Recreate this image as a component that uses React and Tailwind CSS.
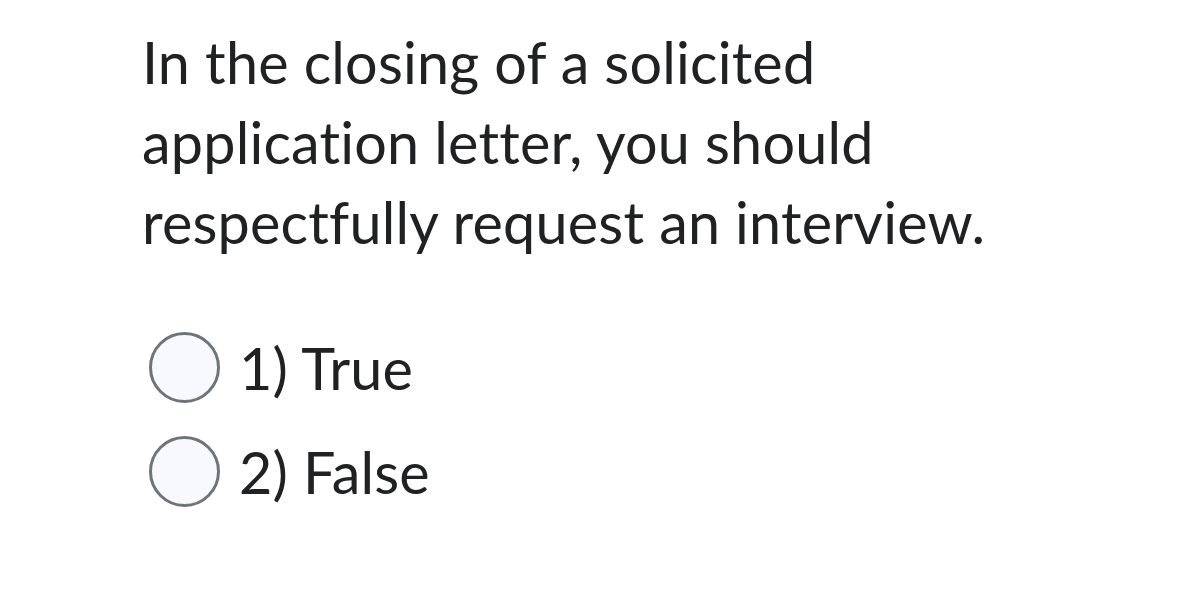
export default function App() {
  const options = ["1) True", "2) False"];
  return (
    <div className="min-h-screen w-full bg-white font-['Lato','Noto_Sans',sans-serif] tracking-[0.2px] text-[#202122] [font-variant-ligatures:none]">
      <div className="pl-[142px] pt-[22px]">
        <p className="w-[950px] text-[57.5px] leading-[80px]">
          In the closing of a solicited application letter, you should respectfully request an interview.
        </p>
        <div className="mt-[70px] flex flex-col gap-[33px] pl-[7px]">
          {options.map((o) => (
            <label key={o} className="flex items-center gap-[19px]">
              <span className="h-[71px] w-[71px] shrink-0 rounded-full border-[3px] border-[#6f7478] bg-[#f8f9fe]" />
              <span className="text-[57.5px] leading-[70px]">{o}</span>
            </label>
          ))}
        </div>
      </div>
    </div>
  );
}
